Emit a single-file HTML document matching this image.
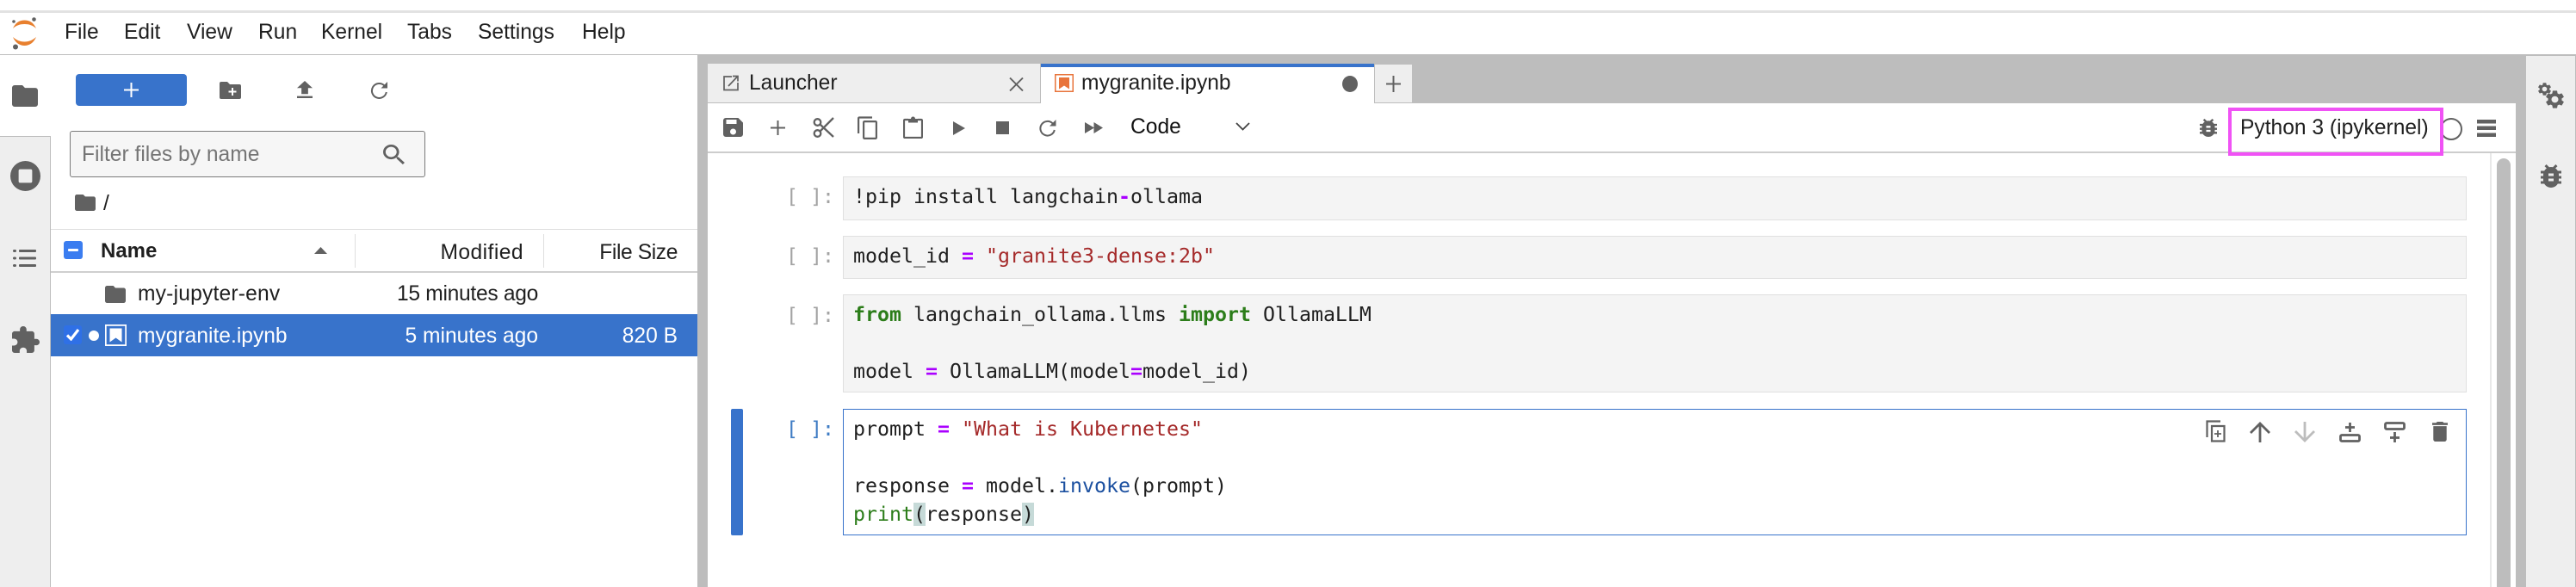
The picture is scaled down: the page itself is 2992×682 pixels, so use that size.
<!DOCTYPE html>
<html lang="en">
<head>
<meta charset="utf-8">
<title>mygranite.ipynb</title>
<style>
html,body{margin:0;padding:0;width:2992px;height:682px;overflow:hidden;background:#fff}
#w{position:absolute;left:0;top:0;width:2992px;height:682px;overflow:hidden;background:#fff;filter:blur(.35px);font-family:"Liberation Sans",sans-serif;font-size:24.6px;color:#1f1f1f}
.b{position:absolute;box-sizing:border-box}
.t{position:absolute;white-space:pre;line-height:34px;height:34px}
.r{text-align:right}
svg{position:absolute;fill:#616161}
.m{position:absolute;white-space:pre;font-family:"DejaVu Sans Mono",monospace;font-size:23.25px;line-height:33px;height:33px;color:#1f1f1f}
.p{color:#a3a3a3;left:913px}
.o{color:#a0f;font-weight:bold}
.s{color:#a52a2a}
.k{color:#2c7d1a;font-weight:bold}
.g{color:#2c7d1a}
.f{color:#1c50a0}
.mb{background:#c6dad8}
</style>
</head>
<body>
<div id="w">
<!-- top strip + menu -->
<div class="b" style="left:0;top:12px;width:2992px;height:3px;background:#e2e2e2"></div>
<div class="b" style="left:0;top:63px;width:2992px;height:1px;background:#bdbdbd"></div>
<svg style="left:14px;top:20px;width:30px;height:38px" viewBox="0 0 30 38">
<path fill="#e8802f" d="M1 13C4 6 9 3.500 14.500 3.500S25 6 28 13C24 9.500 20 8 14.500 8S5 9.500 1 13Z"/>
<path fill="#e8802f" d="M1 23C4 30 9 33 14.500 33S25 30 28 23C24 26.500 20 28.500 14.500 28.500S5 26.500 1 23Z"/>
<circle cx="2" cy="5" r="1.800" fill="#616161"/><circle cx="25.500" cy="2.500" r="2.300" fill="#616161"/><circle cx="4" cy="34.500" r="3" fill="#616161"/>
</svg>
<div class="t" style="left:75px;top:21px">File</div>
<div class="t" style="left:144px;top:21px">Edit</div>
<div class="t" style="left:217px;top:21px">View</div>
<div class="t" style="left:300px;top:21px">Run</div>
<div class="t" style="left:373px;top:21px">Kernel</div>
<div class="t" style="left:473px;top:21px">Tabs</div>
<div class="t" style="left:555px;top:21px">Settings</div>
<div class="t" style="left:676px;top:21px">Help</div>

<!-- left strip -->
<div class="b" style="left:0;top:158px;width:59px;height:524px;background:#eee;border-top:1px solid #bdbdbd;border-right:1px solid #bdbdbd"></div>
<svg style="left:14px;top:99px;width:30px;height:25px" viewBox="2 4 20 16" preserveAspectRatio="none"><path d="M10 4H4c-1.100 0-1.990.9-1.990 2L2 18c0 1.100.9 2 2 2h16c1.100 0 2-.9 2-2V8c0-1.100-.9-2-2-2h-8l-2-2z"/></svg>
<svg style="left:12px;top:187px;width:35px;height:35px" viewBox="0 0 20 20"><path fill-rule="evenodd" d="M10 0a10 10 0 1 0 0 20a10 10 0 1 0 0-20ZM6.500 5.500h7a1 1 0 0 1 1 1v7a1 1 0 0 1-1 1h-7a1 1 0 0 1-1-1v-7a1 1 0 0 1 1-1Z"/></svg>
<svg style="left:15px;top:289px;width:27px;height:22px" viewBox="0 0 27 22"><rect x="0" y="1" width="4" height="3" rx="1.500"/><rect x="0" y="9.500" width="4" height="3" rx="1.500"/><rect x="0" y="18" width="4" height="3" rx="1.500"/><rect x="7" y="1" width="20" height="3" rx="1"/><rect x="7" y="9.500" width="20" height="3" rx="1"/><rect x="7" y="18" width="20" height="3" rx="1"/></svg>
<svg style="left:14px;top:379px;width:32px;height:31px" viewBox="2 1 21 21" preserveAspectRatio="none"><path d="M20.500 11H19V7c0-1.100-.9-2-2-2h-4V3.500C13 2.120 11.880 1 10.500 1S8 2.120 8 3.500V5H4c-1.100 0-1.990.9-1.990 2v3.800H3.500c1.490 0 2.700 1.210 2.700 2.700s-1.210 2.700-2.700 2.700H2V20c0 1.100.9 2 2 2h3.800v-1.500c0-1.490 1.210-2.700 2.700-2.700 1.490 0 2.700 1.210 2.700 2.700V22H17c1.100 0 2-.9 2-2v-4h1.500c1.380 0 2.500-1.120 2.500-2.500S21.880 11 20.500 11z"/></svg>

<!-- file browser -->
<div class="b" style="left:88px;top:86px;width:129px;height:37px;background:#3873cb;border-radius:4px"></div>
<svg style="left:144px;top:96px;width:17px;height:17px;fill:#fff" viewBox="0 0 17 17"><rect x="7.500" y="0" width="2" height="17"/><rect x="0" y="7.500" width="17" height="2"/></svg>
<svg style="left:255px;top:95px;width:25px;height:20px" viewBox="0 0 25 20"><path fill-rule="evenodd" d="M2 0H9L12 3H23a2 2 0 0 1 2 2V18a2 2 0 0 1-2 2H2a2 2 0 0 1-2-2V2a2 2 0 0 1 2-2ZM14 7V10.500H10.500V12.500H14V16H16V12.500H19.500V10.500H16V7Z"/></svg>
<svg style="left:345px;top:94px;width:18px;height:20px" viewBox="5 3 14 17" preserveAspectRatio="none"><path d="M9 16h6v-6h4l-7-7-7 7h4zm-4 2h14v2H5z"/></svg>
<svg style="left:430px;top:95px;width:21px;height:20px;fill:none;stroke:#616161;stroke-width:2" viewBox="0 0 21 20"><path d="M16.500 4.500A8.500 8.500 0 1 0 18.800 12"/><path d="M12.500 7.500H20V0Z" fill="#616161" stroke="none"/></svg>
<div class="b" style="left:81px;top:152px;width:413px;height:54px;background:#f6f6f6;border:1px solid #7a7a7a;border-radius:3px"></div>
<div class="t" style="left:95px;top:163px;color:#757575">Filter files by name</div>
<svg style="left:445px;top:168px;width:25px;height:23px" viewBox="3 3 17.500 17.500" preserveAspectRatio="none"><path d="M15.500 14h-.79l-.28-.27C15.410 12.590 16 11.110 16 9.500 16 5.910 13.090 3 9.500 3S3 5.910 3 9.500 5.910 16 9.500 16c1.610 0 3.090-.59 4.230-1.570l.27.28v.79l5 4.990L20.490 19l-4.990-5zm-6 0C7.010 14 5 11.990 5 9.500S7.010 5 9.500 5 14 7.010 14 9.500 11.990 14 9.500 14z"/></svg>
<svg style="left:87px;top:226px;width:24px;height:19px" viewBox="2 4 20 16" preserveAspectRatio="none"><path d="M10 4H4c-1.100 0-1.990.9-1.990 2L2 18c0 1.100.9 2 2 2h16c1.100 0 2-.9 2-2V8c0-1.100-.9-2-2-2h-8l-2-2z"/></svg>
<div class="t" style="left:120px;top:220px">/</div>

<div class="b" style="left:59px;top:266px;width:751px;height:1px;background:#dedede"></div>
<div class="b" style="left:59px;top:315px;width:751px;height:2px;background:#cfcfcf"></div>
<div class="b" style="left:74px;top:280px;width:22px;height:21px;background:#3b7df0;border-radius:3px"></div>
<div class="b" style="left:79px;top:289px;width:12px;height:3px;background:#fff;border-radius:1px"></div>
<div class="t" style="left:117px;top:275px;font-weight:bold;font-size:24px">Name</div>
<svg style="left:365px;top:287px;width:15px;height:8px" viewBox="0 0 15 8"><path d="M7.500 0L15 8H0Z"/></svg>
<div class="b" style="left:412px;top:272px;width:1px;height:39px;background:#dedede"></div>
<div class="b" style="left:631px;top:272px;width:1px;height:39px;background:#dedede"></div>
<div class="t r" style="left:400px;width:208px;top:277px;letter-spacing:.45px">Modified</div>
<div class="t r" style="left:600px;width:187px;top:277px;letter-spacing:-.4px">File Size</div>

<svg style="left:122px;top:332px;width:24px;height:20px" viewBox="2 4 20 16" preserveAspectRatio="none"><path d="M10 4H4c-1.100 0-1.990.9-1.990 2L2 18c0 1.100.9 2 2 2h16c1.100 0 2-.9 2-2V8c0-1.100-.9-2-2-2h-8l-2-2z"/></svg>
<div class="t" style="left:160px;top:325px;letter-spacing:.2px">my-jupyter-env</div>
<div class="t r" style="left:400px;width:225px;top:325px;letter-spacing:-.3px">15 minutes ago</div>

<div class="b" style="left:59px;top:365px;width:751px;height:49px;background:#3873cb"></div>
<div class="b" style="left:74px;top:378px;width:21px;height:22px;background:#2f70e6;border-radius:3px"></div>
<svg style="left:76px;top:381px;width:17px;height:15px;fill:none" viewBox="0 0 17 15"><path d="M2 8.500L6.500 13L15 2" stroke="#fff" stroke-width="3.200"/></svg>
<div class="b" style="left:103px;top:384px;width:12px;height:12px;background:#fff;border-radius:50%"></div>
<svg style="left:122px;top:377px;width:25px;height:25px;fill:#fff" viewBox="0 0 25 25"><path fill-rule="evenodd" d="M0 0H25V25H0ZM1.700 1.700V23.300H23.300V1.700Z"/><path d="M5.500 4.500H19.500V20.500L12.500 15.500L5.500 20.500Z"/></svg>
<div class="t" style="left:160px;top:374px;color:#fff">mygranite.ipynb</div>
<div class="t r" style="left:400px;width:225px;top:374px;color:#fff">5 minutes ago</div>
<div class="t r" style="left:640px;width:147px;top:374px;color:#fff">820 B</div>

<!-- main dock background -->
<div class="b" style="left:810px;top:63px;width:2123px;height:619px;background:#bdbdbd"></div>

<!-- tabs -->
<div class="b" style="left:822px;top:74px;width:386px;height:45px;background:#eee"></div>
<svg style="left:839px;top:87px;width:20px;height:19px;fill:none;stroke:#616161;stroke-width:1.700" viewBox="0 0 20 19"><path d="M11 2H2V17.500H18V9"/><path d="M7 13L17.500 2M12 1.500H18V7.500"/></svg>
<div class="t" style="left:870px;top:80px">Launcher</div>
<svg style="left:1172px;top:90px;width:17px;height:16px;fill:none;stroke:#616161;stroke-width:1.900" viewBox="0 0 17 16"><path d="M1 .5L16 15.500M16 .5L1 15.500"/></svg>
<div class="b" style="left:1209px;top:74px;width:387px;height:46px;background:#fff;border-top:4px solid #3873cb"></div>
<svg style="left:1225px;top:86px;width:22px;height:21px;fill:#e8743b" viewBox="0 0 22 21"><path fill-rule="evenodd" d="M0 0H22V21H0ZM1.500 1.500V19.500H20.500V1.500Z"/><path d="M5 4H17V17.500L11 13.500L5 17.500Z"/></svg>
<div class="t" style="left:1256px;top:80px">mygranite.ipynb</div>
<div class="b" style="left:1559px;top:88px;width:18px;height:19px;background:#616161;border-radius:50%"></div>
<div class="b" style="left:1597px;top:75px;width:43px;height:44px;background:#eee"></div>
<svg style="left:1610px;top:88px;width:17px;height:19px" viewBox="0 0 17 19"><rect x="7.500" y="0" width="2" height="19"/><rect x="0" y="8.500" width="17" height="2"/></svg>

<!-- notebook -->
<div class="b" style="left:822px;top:120px;width:2100px;height:562px;background:#fff"></div>
<div class="b" style="left:822px;top:176px;width:2100px;height:2px;background:#cdcdcd"></div>

<!-- toolbar icons -->
<svg style="left:840px;top:137px;width:23px;height:22px" viewBox="0 0 23 22"><path fill-rule="evenodd" d="M3 0H17.500L23 5.500V19a3 3 0 0 1-3 3H3a3 3 0 0 1-3-3V3a3 3 0 0 1 3-3ZM3.500 2V7H15.500V2ZM11.500 12.500a3.500 3.500 0 1 0 0 7a3.500 3.500 0 1 0 0-7Z"/></svg>
<svg style="left:895px;top:140px;width:17px;height:17px" viewBox="0 0 17 17"><rect x="7.500" y="0" width="2" height="17"/><rect x="0" y="7.500" width="17" height="2"/></svg>
<svg style="left:944px;top:136px;width:25px;height:24px;fill:none;stroke:#616161;stroke-width:2.300" viewBox="0 0 25 24"><circle cx="5.500" cy="6" r="3.800"/><circle cx="5.500" cy="19" r="3.800"/><path d="M8.500 8.500L24 23M8.500 16.500L24 1"/></svg>
<svg style="left:996px;top:135px;width:23px;height:27px;fill:none;stroke:#616161;stroke-width:2.200" viewBox="0 0 23 27"><path d="M17 1.500H2a.9.9 0 0 0-.9.9V20"/><rect x="7.100" y="6.100" width="14.800" height="19.800" rx="1"/></svg>
<svg style="left:1049px;top:134px;width:23px;height:27px;fill:none;stroke:#616161;stroke-width:2.200" viewBox="0 0 23 27"><path d="M6 5H2a1 1 0 0 0-1 1V25a1 1 0 0 0 1 1H21a1 1 0 0 0 1-1V6a1 1 0 0 0-1-1H17"/><path d="M6 8.500V4H9a2.500 2.500 0 0 1 5 0H17V8.500Z" fill="#616161" stroke="none"/></svg>
<svg style="left:1107px;top:141px;width:14px;height:16px" viewBox="0 0 14 16"><path d="M0 0L14 8L0 16Z"/></svg>
<svg style="left:1157px;top:141px;width:15px;height:15px" viewBox="0 0 15 15"><rect width="15" height="15"/></svg>
<svg style="left:1207px;top:139px;width:20px;height:20px;fill:none;stroke:#616161;stroke-width:2" viewBox="0 0 20 20"><path d="M15.700 4.500A8.300 8.300 0 1 0 17.800 12"/><path d="M12 7.500H19.500V0Z" fill="#616161" stroke="none"/></svg>
<svg style="left:1260px;top:142px;width:21px;height:13px" viewBox="0 0 21 13"><path d="M0 0L11 6.500L0 13ZM10.500 0L21 6.500L10.500 13Z"/></svg>
<div class="t" style="left:1313px;top:131px;color:#111">Code</div>
<svg style="left:1435px;top:142px;width:17px;height:10px;fill:none;stroke:#444;stroke-width:1.800" viewBox="0 0 17 10"><path d="M1 1L8.500 8.500L16 1"/></svg>

<svg style="left:2555px;top:138px;width:20px;height:21px" viewBox="4 3 16 18" preserveAspectRatio="none"><path d="M20 8h-2.810c-.45-.78-1.070-1.450-1.820-1.960L17 4.410 15.590 3l-2.170 2.170C12.960 5.060 12.490 5 12 5c-.49 0-.96.06-1.410.17L8.410 3 7 4.410l1.620 1.630C7.880 6.550 7.260 7.220 6.810 8H4v2h2.090c-.05.33-.09.66-.09 1v1H4v2h2v1c0 .34.04.67.09 1H4v2h2.810c1.040 1.790 2.970 3 5.190 3s4.150-1.210 5.190-3H20v-2h-2.090c.05-.33.09-.66.09-1v-1h2v-2h-2v-1c0-.34-.04-.67-.09-1H20V8zm-6 8h-4v-2h4v2zm0-4h-4v-2h4v2z"/></svg>
<div class="t" style="left:2602px;top:132px">Python 3 (ipykernel)</div>
<div class="b" style="left:2834px;top:137px;width:26px;height:26px;border:2px solid #616161;border-radius:50%"></div>
<div class="b" style="left:2588px;top:125px;width:250px;height:56px;border:4px solid #f052f5"></div>
<svg style="left:2877px;top:139px;width:22px;height:20px" viewBox="0 0 22 20"><rect y="0" width="22" height="4.500"/><rect y="7.500" width="22" height="4.500"/><rect y="15.500" width="22" height="4.500"/></svg>

<!-- scrollbar -->
<div class="b" style="left:2892px;top:178px;width:2px;height:504px;background:#e8e8e8"></div>
<div class="b" style="left:2900px;top:184px;width:16px;height:498px;background:#bdbdbd;border-radius:8px 8px 0 0"></div>

<!-- cells -->
<div class="b" style="left:979px;top:205px;width:1886px;height:51px;background:#f4f4f4;border:1px solid #e0e0e0"></div>
<div class="b" style="left:979px;top:274px;width:1886px;height:50px;background:#f4f4f4;border:1px solid #e0e0e0"></div>
<div class="b" style="left:979px;top:342px;width:1886px;height:114px;background:#f4f4f4;border:1px solid #e0e0e0"></div>
<div class="b" style="left:849px;top:475px;width:14px;height:147px;background:#3873cb;border-radius:2px"></div>
<div class="b" style="left:979px;top:475px;width:1886px;height:147px;background:#fff;border:1px solid #3873cb"></div>

<div class="m p" style="top:212px">[ ]:</div>
<div class="m p" style="top:281px">[ ]:</div>
<div class="m p" style="top:350px">[ ]:</div>
<div class="m p" style="top:482px;color:#3f7cc4">[ ]:</div>

<div class="m" style="left:991px;top:212px">!pip install langchain<span class="o">-</span>ollama</div>
<div class="m" style="left:991px;top:281px">model_id <span class="o">=</span> <span class="s">"granite3-dense:2b"</span></div>
<div class="m" style="left:991px;top:349px"><span class="k">from</span> langchain_ollama.llms <span class="k">import</span> OllamaLLM</div>
<div class="m" style="left:991px;top:415px">model <span class="o">=</span> OllamaLLM(model<span class="o">=</span>model_id)</div>
<div class="m" style="left:991px;top:482px">prompt <span class="o">=</span> <span class="s">"What is Kubernetes"</span></div>
<div class="m" style="left:991px;top:548px">response <span class="o">=</span> model.<span class="f">invoke</span>(prompt)</div>
<div class="m" style="left:991px;top:581px"><span class="g">print</span><span class="mb">(</span>response<span class="mb">)</span></div>

<!-- cell toolbar -->
<svg style="left:2562px;top:488px;width:23px;height:26px;fill:none;stroke:#616161;stroke-width:2.200" viewBox="0 0 23 26"><path d="M17 1.500H1.500V20"/><path d="M7 7H21.500V24.500H7Z"/><path d="M14 12V20M10 16H18" stroke-width="1.800"/></svg>
<svg style="left:2613px;top:490px;width:24px;height:24px;fill:none;stroke:#616161;stroke-width:2.800" viewBox="0 0 24 24"><path d="M12 24V2M1 13L12 2L23 13"/></svg>
<svg style="left:2665px;top:490px;width:24px;height:24px;fill:none;stroke:#bdbdbd;stroke-width:2.800" viewBox="0 0 24 24"><path d="M12 0V22M1 11L12 22L23 11"/></svg>
<svg style="left:2717px;top:490px;width:25px;height:24px;fill:none;stroke:#616161;stroke-width:2.800" viewBox="0 0 25 24"><path d="M12.500 1V12M7 6.500H18"/><rect x="1.500" y="15.500" width="22" height="7" rx="1.500"/></svg>
<svg style="left:2769px;top:490px;width:25px;height:24px;fill:none;stroke:#616161;stroke-width:2.800" viewBox="0 0 25 24"><path d="M12.500 12V24M7 18.500H18"/><rect x="1.500" y="1.500" width="22" height="7" rx="1.500"/></svg>
<svg style="left:2825px;top:490px;width:18px;height:23px" viewBox="5 3 14 18" preserveAspectRatio="none"><path d="M6 19c0 1.100.9 2 2 2h8c1.100 0 2-.9 2-2V7H6v12zM19 4h-3.500l-1-1h-5l-1 1H5v2h14V4z"/></svg>

<!-- right strip -->
<div class="b" style="left:2933px;top:64px;width:59px;height:618px;background:#eee;border-top:1px solid #bdbdbd;border-left:1px solid #bdbdbd;border-right:1px solid #bdbdbd"></div>
<svg style="left:2948px;top:96px;width:15px;height:15px" viewBox="2.500 2 19 20" preserveAspectRatio="none"><path d="M19.140 12.940c.04-.3.060-.61.060-.94 0-.32-.02-.64-.07-.94l2.030-1.580c.18-.14.230-.41.120-.61l-1.920-3.320c-.12-.22-.37-.29-.59-.22l-2.390.96c-.5-.38-1.030-.7-1.620-.94l-.36-2.540c-.04-.24-.24-.41-.48-.41h-3.840c-.24 0-.43.17-.47.41l-.36 2.540c-.59.24-1.130.57-1.620.94l-2.390-.96c-.22-.08-.47 0-.59.22L2.740 8.870c-.12.21-.08.47.12.61l2.030 1.580c-.05.3-.09.63-.09.94s.02.64.07.94l-2.030 1.580c-.18.14-.23.41-.12.61l1.920 3.320c.12.22.37.29.59.22l2.390-.96c.5.38 1.030.7 1.620.94l.36 2.540c.05.24.24.41.48.41h3.840c.24 0 .44-.17.47-.41l.36-2.540c.59-.24 1.130-.56 1.620-.94l2.390.96c.22.08.47 0 .59-.22l1.920-3.320c.12-.22.070-.47-.12-.61l-2.010-1.580zM12 15.600c-1.980 0-3.600-1.620-3.600-3.600s1.620-3.600 3.600-3.600 3.600 1.620 3.600 3.600-1.620 3.600-3.600 3.600z"/></svg>
<svg style="left:2957px;top:105px;width:21px;height:21px" viewBox="2.500 2 19 20" preserveAspectRatio="none"><path d="M19.140 12.940c.04-.3.060-.61.060-.94 0-.32-.02-.64-.07-.94l2.030-1.580c.18-.14.230-.41.120-.61l-1.920-3.320c-.12-.22-.37-.29-.59-.22l-2.390.96c-.5-.38-1.030-.7-1.620-.94l-.36-2.540c-.04-.24-.24-.41-.48-.41h-3.840c-.24 0-.43.17-.47.41l-.36 2.540c-.59.24-1.130.57-1.620.94l-2.390-.96c-.22-.08-.47 0-.59.22L2.740 8.870c-.12.21-.08.47.12.61l2.030 1.580c-.05.3-.09.63-.09.94s.02.64.07.94l-2.030 1.580c-.18.14-.23.41-.12.61l1.920 3.320c.12.22.37.29.59.22l2.390-.96c.5.38 1.030.7 1.620.94l.36 2.540c.05.24.24.41.48.41h3.840c.24 0 .44-.17.47-.41l.36-2.540c.59-.24 1.130-.56 1.620-.94l2.390.96c.22.08.47 0 .59-.22l1.920-3.320c.12-.22.070-.47-.12-.61l-2.010-1.580zM12 15.600c-1.980 0-3.600-1.620-3.600-3.600s1.620-3.600 3.600-3.600 3.600 1.620 3.600 3.600-1.620 3.600-3.600 3.600z"/></svg>
<svg style="left:2951px;top:191px;width:24px;height:27px" viewBox="4 3 16 18" preserveAspectRatio="none"><path d="M20 8h-2.810c-.45-.78-1.070-1.450-1.820-1.960L17 4.410 15.590 3l-2.170 2.170C12.960 5.060 12.490 5 12 5c-.49 0-.96.06-1.410.17L8.410 3 7 4.410l1.620 1.630C7.880 6.550 7.260 7.220 6.810 8H4v2h2.090c-.05.33-.09.66-.09 1v1H4v2h2v1c0 .34.04.67.09 1H4v2h2.810c1.040 1.790 2.970 3 5.190 3s4.150-1.210 5.190-3H20v-2h-2.090c.05-.33.09-.66.09-1v-1h2v-2h-2v-1c0-.34-.04-.67-.09-1H20V8zm-6 8h-4v-2h4v2zm0-4h-4v-2h4v2z"/></svg>
</div>
</body>
</html>
